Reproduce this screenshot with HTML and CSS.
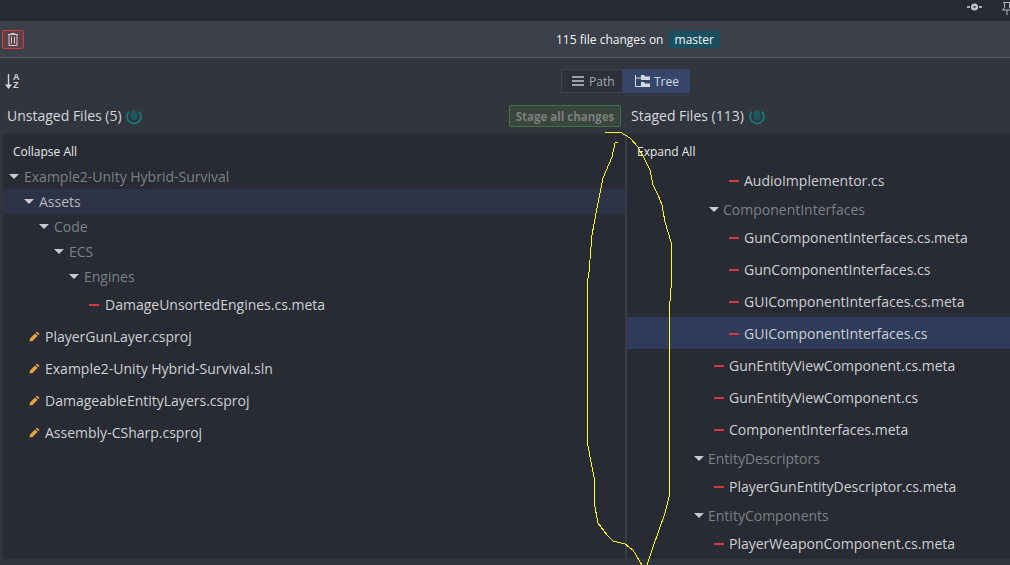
FILE: index.html
```html
<!DOCTYPE html>
<html lang="en">
<head>
<meta charset="utf-8">
<title>Changes</title>
<link rel="stylesheet" href="styles.css">
</head>
<body>
<div class="app">
  <header class="titlebar">
    <svg class="tb-icon" width="15" height="8" viewBox="0 0 15 8"><path d="M0 3h3v2H0zM12 3h3v2h-3z" fill="#a9adb5"/><circle cx="7.500" cy="4" r="3.500" fill="#c3c6cc"/><circle cx="7.500" cy="4" r="1.200" fill="#44474f"/></svg>
    <svg class="tb-icon pin" width="10" height="13" viewBox="0 0 10 13"><path d="M1.500.5h7L7.500 2v3.500L9.500 8h-9l2-2.500V2z" fill="none" stroke="#b5b8bf"/><path d="M4.500 8h1v5h-1z" fill="#b5b8bf"/></svg>
  </header>
  <section class="summary">
    <button class="trash" aria-label="Discard">
      <svg width="10" height="13" viewBox="0 0 10 13"><path d="M0 1.500h10M3 1.500V.5h4v1M1 1.500h8v11H1zM3.500 3.500v7M6.500 3.500v7" fill="none" stroke="#cfc9ca"/></svg>
    </button>
    <p class="summary-text">115 file changes on <span class="branch">master</span></p>
  </section>
  <section class="toolbar">
    <div class="view-row">
      <svg class="sort" width="7" height="15" viewBox="0 0 7 15"><path d="M3.500 0v12" stroke="#d5d7db" stroke-width="1.400"/><path d="M0 10.500h7L3.500 15z" fill="#d5d7db"/></svg>
      <span class="az"><span>A</span><span>Z</span></span>
      <div class="toggle">
        <span class="seg">
          <svg width="12" height="10" viewBox="0 0 12 10"><path d="M0 0h12v2H0zM0 4h12v2H0zM0 8h12v2H0z" fill="#9da1a9"/></svg>Path</span>
        <span class="seg on">
          <svg width="15" height="12" viewBox="0 0 15 12"><path d="M.5 0v11.500H6M.5 3H6" fill="none" stroke="#d5d9e2"/><path d="M6 0h3l1 1.500h5V5H6zM6 7h3l1 1.500h5V12H6z" fill="#d5d9e2"/></svg>Tree</span>
      </div>
    </div>
    <div class="heads">
      <div class="head left">
        <span class="title">Unstaged Files (5)</span>
        <svg class="ring" width="16" height="16" viewBox="0 0 16 16"><path d="M3 2.500a7 7 0 1 0 10 0" fill="none" stroke="#1c7472" stroke-width="2"/><path d="M8 1c2.500 0 3.500 3 3.500 6S10 11.500 8 11.500 4.500 10 4.500 7 5.500 1 8 1z" fill="#1d5a5c"/></svg>
        <button class="stage">Stage all changes</button>
      </div>
      <div class="head right">
        <span class="title">Staged Files (113)</span>
        <svg class="ring" width="16" height="16" viewBox="0 0 16 16"><path d="M3 2.500a7 7 0 1 0 10 0" fill="none" stroke="#1c7472" stroke-width="2"/><path d="M8 1c2.500 0 3.500 3 3.500 6S10 11.500 8 11.500 4.500 10 4.500 7 5.500 1 8 1z" fill="#1d5a5c"/></svg>
      </div>
    </div>
  </section>
  <main class="panels">
    <section class="panel panel-left">
      <div class="act">Collapse All</div>
      <div class="row folder d0"><i class="tri"></i>Example2-Unity Hybrid-Survival</div>
      <div class="row folder d1 sel"><i class="tri"></i><span class="lit">Assets</span></div>
      <div class="row folder d2"><i class="tri"></i>Code</div>
      <div class="row folder d3"><i class="tri"></i>ECS</div>
      <div class="row folder d4"><i class="tri"></i>Engines</div>
      <div class="row file d5"><i class="minus"></i>DamageUnsortedEngines.cs.meta</div>
      <div class="row file d0e"><svg class="pencil" viewBox="0 0 11 11"><path d="M8 .5l2.500 2.500-1.300 1.300-2.500-2.500zM6 2.500L8.500 5 3.500 10 .5 10.500 1 7.500z" fill="#e8a23c"/></svg>PlayerGunLayer.csproj</div>
      <div class="row file d0e"><svg class="pencil" viewBox="0 0 11 11"><path d="M8 .5l2.500 2.500-1.300 1.300-2.500-2.500zM6 2.500L8.500 5 3.500 10 .5 10.500 1 7.500z" fill="#e8a23c"/></svg>Example2-Unity Hybrid-Survival.sln</div>
      <div class="row file d0e"><svg class="pencil" viewBox="0 0 11 11"><path d="M8 .5l2.500 2.500-1.300 1.300-2.500-2.500zM6 2.500L8.500 5 3.500 10 .5 10.500 1 7.500z" fill="#e8a23c"/></svg>DamageableEntityLayers.csproj</div>
      <div class="row file d0e"><svg class="pencil" viewBox="0 0 11 11"><path d="M8 .5l2.500 2.500-1.300 1.300-2.500-2.500zM6 2.500L8.500 5 3.500 10 .5 10.500 1 7.500z" fill="#e8a23c"/></svg>Assembly-CSharp.csproj</div>
    </section>
    <section class="panel panel-right">
      <div class="act">Expand All</div>
      <div class="row file r4"><i class="minus"></i>AudioImplementor.cs</div>
      <div class="row folder r3"><i class="tri"></i>ComponentInterfaces</div>
      <div class="row file r4"><i class="minus"></i>GunComponentInterfaces.cs.meta</div>
      <div class="row file r4"><i class="minus"></i>GunComponentInterfaces.cs</div>
      <div class="row file r4"><i class="minus"></i>GUIComponentInterfaces.cs.meta</div>
      <div class="row file r4 sel-file"><i class="minus"></i>GUIComponentInterfaces.cs</div>
      <div class="row file r3f"><i class="minus"></i>GunEntityViewComponent.cs.meta</div>
      <div class="row file r3f"><i class="minus"></i>GunEntityViewComponent.cs</div>
      <div class="row file r3f"><i class="minus"></i>ComponentInterfaces.meta</div>
      <div class="row folder r2"><i class="tri"></i>EntityDescriptors</div>
      <div class="row file r3f"><i class="minus"></i>PlayerGunEntityDescriptor.cs.meta</div>
      <div class="row folder r2"><i class="tri"></i>EntityComponents</div>
      <div class="row file r3f"><i class="minus"></i>PlayerWeaponComponent.cs.meta</div>
    </section>
  </main>
  <svg class="scribble" width="1010" height="565" viewBox="0 0 1010 565" shape-rendering="crispEdges"><path d="M605 132H620L630 138 638 147 645 160 650 170 653 185 658 195 662 205 665 222 671 242V288L669 315V497L665 513 658 533 653 547 647 565M642 565L633 550 625 544 613 541 607 535 598 523 595 507 594 477 590 457 587 440V285L589 272 592 235 597 208 603 178 612 157 615 143 618 142" fill="none" stroke="#ffff00" stroke-width="1"/></svg>
</div>
</body>
</html>
```
FILE: styles.css
```css
* { box-sizing: border-box; }
html, body { margin: 0; height: 100%; }
body { background: #31353e; font-family: "Open Sans", "Noto Sans", sans-serif; overflow: hidden; }
.app { position: relative; width: 1010px; height: 565px; overflow: hidden; display: flex; flex-direction: column; }
.titlebar { height: 21px; flex: none; background: #282a32; display: flex; justify-content: flex-end; align-items: flex-start; padding: 2px 0 0; gap: 20px; margin-right: -2px; }
.tb-icon { margin-top: 1px; }
.pin { margin-top: 0; }
.summary { height: 37px; flex: none; background: #3c404a; border-bottom: 1px solid #555963; display: flex; align-items: center; position: relative; padding-left: 2px; }
.trash { width: 22px; height: 19px; padding: 0; background: #5a4248; border: 1px solid #d13c3c; border-radius: 2px; display: flex; align-items: center; justify-content: center; }
.summary-text { position: absolute; left: 556px; top: 9px; margin: 0; font-size: 12px; line-height: 20px; color: #f2f3f5; white-space: nowrap; }
.branch { background: #19505f; color: #f2f3f5; padding: 0 6px; margin-left: 2px; border-radius: 2px; display: inline-block; line-height: 17px; }
.toolbar { height: 76px; flex: none; background: #31353e; display: flex; flex-direction: column; }
.view-row { height: 36px; position: relative; flex: none; }
.sort { position: absolute; left: 5px; top: 16px; }
.az { position: absolute; left: 13px; top: 15px; display: flex; flex-direction: column; font-family: "Liberation Sans", sans-serif; font-size: 9px; font-weight: 700; line-height: 8px; color: #d5d7db; }
.toggle { position: absolute; left: 561px; top: 11px; display: flex; height: 24px; }
.seg { display: flex; align-items: center; gap: 5px; font-size: 12px; color: #a4a8b0; width: 62px; padding-left: 10px; border: 1px solid #3e424c; background: #2d3038; }
.seg.on { width: 67px; gap: 4px; background: #36456a; border-color: #36456a; color: #d5d9e2; padding-left: 11px; }
.heads { display: flex; height: 40px; }
.head { display: flex; align-items: center; position: relative; }
.head.left { width: 626px; padding-left: 7px; }
.head.right { padding-left: 5px; }
.title { font-size: 14px; color: #d5d7db; margin-top: 2px; }
.ring { margin-left: 4px; margin-top: 6px; }
.head.right .ring { margin-left: 5px; }
.stage { position: absolute; left: 509px; top: 11px; width: 112px; height: 22px; padding: 0; background: #3a453f; border: 1px solid #3f7247; border-radius: 2px; font: 700 11.500px "Open Sans", sans-serif; color: #7a807c; }
.panels { height: 425px; flex: none; display: flex; margin-left: 3px; background: #282b33; overflow: hidden; }
.panel { flex: none; overflow: hidden; }
.panel-left { width: 622px; }
.panel-right { flex: 1; border-left: 2px solid #3a3d46; }
.act { height: 30px; padding: 8px 0 0 10px; font-size: 12px; line-height: 20px; color: #e6e7ea; }
.row { display: flex; align-items: center; white-space: nowrap; font-size: 14px; }
.folder { height: 25px; color: #7d8087; }
.file { height: 32px; color: #cfd0d4; }
.panel-right .folder { padding-top: 2px; }
.panel-right .tri { margin-right: 4px; }
.panel-right .minus { margin-right: 5px; }
.d5 { margin-top: -1px; }
.lit { color: #b4b6bb; }
.sel { background: #2d3346; }
.sel-file { background: #2e3b5a; }
.tri { width: 0; height: 0; border-left: 5px solid transparent; border-right: 5px solid transparent; border-top: 5px solid #c8cad0; margin-right: 5px; flex: none; }
.minus { width: 10px; height: 2px; background: #d8373c; margin-top: 2px; margin-right: 6px; flex: none; }
.pencil { width: 11px; height: 11px; margin-right: 5px; flex: none; }
.d0 { padding-left: 6px; }
.d1 { padding-left: 21px; }
.d2 { padding-left: 36px; }
.d3 { padding-left: 51px; }
.d4 { padding-left: 66px; }
.d5 { padding-left: 86px; }
.d0e { padding-left: 26px; }
.r2 { padding-left: 67px; }
.r3 { padding-left: 82px; }
.r3f { padding-left: 87px; }
.r4 { padding-left: 102px; }
.scribble { position: absolute; left: 0; top: 0; pointer-events: none; }
```
